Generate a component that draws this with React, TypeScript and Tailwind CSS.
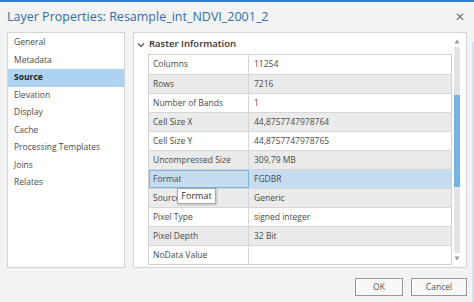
const FONT = { fontFamily: '"Open Sans", "Noto Sans", "Liberation Sans", sans-serif' };

const pages = [
  "General",
  "Metadata",
  "Source",
  "Elevation",
  "Display",
  "Cache",
  "Processing Templates",
  "Joins",
  "Relates",
];

const rows: [string, string][] = [
  ["Columns", "11254"],
  ["Rows", "7216"],
  ["Number of Bands", "1"],
  ["Cell Size X", "44,8757747978764"],
  ["Cell Size Y", "44,8757747978765"],
  ["Uncompressed Size", "309,79 MB"],
  ["Format", "FGDBR"],
  ["Source Type", "Generic"],
  ["Pixel Type", "signed integer"],
  ["Pixel Depth", "32 Bit"],
  ["NoData Value", ""],
];

export default function App() {
  return (
    <div
      className="relative flex h-[302px] w-[474px] flex-col overflow-hidden border-t-2 border-[#2f7fd0] bg-[#f3f3f3] text-[#4a4a4a]"
      style={FONT}
    >
      {/* title bar */}
      <div className="flex h-[30px] items-center justify-between pl-[7px] pr-[9px]">
        <span className="text-[12.5px] text-[#2f6fae]">Layer Properties: Resample_int_NDVI_2001_2</span>
        <span className="text-[12px] text-[#777]">✕</span>
      </div>

      <div className="flex h-[236px] gap-[8px] px-[7px]">
        {/* page list */}
        <div className="w-[118px] border border-[#d4d4d4] bg-white py-px">
          {pages.map((p) => (
            <div
              key={p}
              className={
                p === "Source"
                  ? "flex h-[17.5px] items-center bg-[#acd3f1] pl-[6px] text-[8.5px] font-bold text-[#222]"
                  : "flex h-[17.5px] items-center pl-[6px] text-[8.5px]"
              }
            >
              {p}
            </div>
          ))}
        </div>

        {/* raster info */}
        <div className="flex flex-1 border border-[#d4d4d4] bg-white">
          <div className="flex flex-1 flex-col">
            <div className="flex h-[21px] items-center gap-[4px] pl-[3px] pt-[2px]">
              <svg width="8" height="8" viewBox="0 0 8 8">
                <path d="M1 2.5 L4 5.5 L7 2.5" fill="none" stroke="#555" strokeWidth="1.2" />
              </svg>
              <span className="text-[9.5px] font-semibold text-[#333]">Raster Information</span>
            </div>
            <div className="ml-[14px] mr-[2px] border border-[#d0d0d0]">
              {rows.map(([k, v], i) => {
                const sel = k === "Format";
                const bg = sel ? "bg-[#c6ddf1]" : i % 2 === 1 ? "bg-[#ebebeb]" : "bg-white";
                return (
                  <div key={k} className={`flex h-[19px] ${bg} ${i > 0 ? "border-t border-[#d6d6d6]" : ""}`}>
                    <div
                      className={
                        sel
                          ? "flex w-[100px] items-center border border-[#7fb3df] pl-[3px] text-[8.5px]"
                          : "flex w-[100px] items-center border-r border-[#d6d6d6] pl-[4px] text-[8.5px]"
                      }
                    >
                      {k}
                    </div>
                    <div className="flex flex-1 items-center pl-[5px] text-[8.5px]">{v}</div>
                  </div>
                );
              })}
            </div>
          </div>

          {/* scrollbar */}
          <div className="mr-[6px] flex w-[6px] flex-col items-center pt-[6px] pb-[6px]">
            <svg width="6" height="5" viewBox="0 0 6 5" className="mb-[3px]">
              <path d="M3 0.5 L5.5 4.5 L0.5 4.5 Z" fill="#999" />
            </svg>
            <div className="flex w-[6px] flex-1 flex-col bg-[#e3e3e3]">
              <div className="h-[48px]" />
              <div className="h-[92px] bg-[#72b3e8]" />
            </div>
            <svg width="6" height="5" viewBox="0 0 6 5" className="mt-[3px]">
              <path d="M0.5 0.5 L5.5 0.5 L3 4.5 Z" fill="#999" />
            </svg>
          </div>
        </div>
      </div>

      {/* footer */}
      <div className="flex flex-1 items-start justify-end gap-[8px] pr-[7px] pt-[10px]">
        <button className="h-[18px] w-[48px] border border-[#999] bg-[#f8f8f8] text-[8.5px] text-[#555]">OK</button>
        <button className="h-[18px] w-[56px] border border-[#999] bg-[#f8f8f8] text-[8.5px] text-[#555]">Cancel</button>
      </div>

      {/* tooltip */}
      <div className="absolute left-[177px] top-[186px] flex h-[16px] w-[39px] items-center justify-center border border-[#a8a8a8] bg-white text-[9px] text-[#333] shadow-[1px_1px_2px_rgba(0,0,0,0.2)]">
        Format
      </div>
      <div className="absolute right-0 top-[40px] h-[262px] w-[2px] bg-[#cfe3f5]" />
    </div>
  );
}
